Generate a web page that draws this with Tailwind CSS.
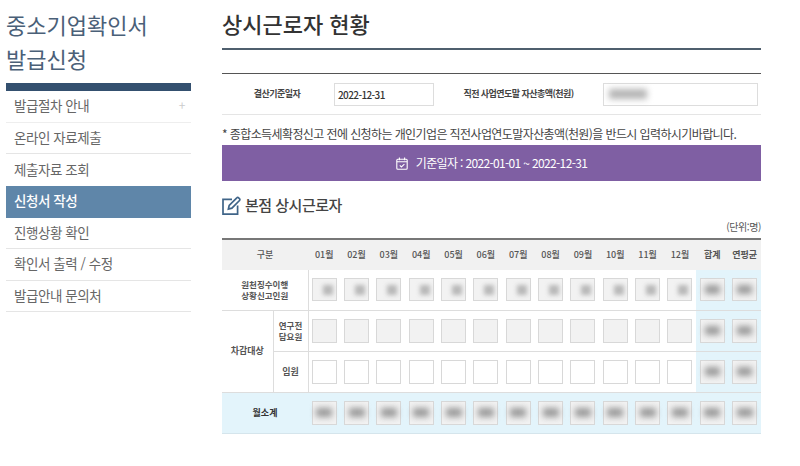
<!DOCTYPE html>
<html lang="ko">
<head>
  <meta charset="UTF-8" />
  <title>상시근로자 현황</title>
  <script src="https://cdn.jsdelivr.net/npm/@tailwindcss/browser@4"></script>
</head>
<body class="bg-white font-['Noto_Sans_CJK_KR','Noto_Sans',sans-serif] overflow-hidden">
<div class="flex w-[800px] h-[466px]">

  <!-- Sidebar -->
  <aside class="w-[185px] ml-[6px] shrink-0 pt-[7px]">
    <h2 class="text-[22px] leading-[34px] text-[#4a6078] h-[76px]">중소기업확인서<br>발급신청</h2>
    <div class="h-[8px] bg-[#34506f]"></div>
    <ul class="text-[13.5px] tracking-[-0.45px] text-[#666]">
      <li class="h-[31.5px] pb-[2px] pl-2 pr-[6px] flex items-center justify-between border-b border-[#eee]">발급절차 안내<span class="text-[#ccc] text-[12px]">+</span></li>
      <li class="h-[31.5px] pb-[2px] pl-2 flex items-center border-b border-[#e5e5e5]">온라인 자료제출</li>
      <li class="h-[31.5px] pb-[2px] pl-2 flex items-center">제출자료 조회</li>
      <li class="h-[32px] pb-[2px] pl-2 flex items-center bg-[#5f86a9] text-white font-medium">신청서 작성</li>
      <li class="h-[31.5px] pb-[2px] pl-2 flex items-center border-b border-[#e5e5e5]">진행상황 확인</li>
      <li class="h-[31.5px] pb-[2px] pl-2 flex items-center border-b border-[#e5e5e5]">확인서 출력 / 수정</li>
      <li class="h-[31.5px] pb-[2px] pl-2 flex items-center border-b border-[#e5e5e5]">발급안내 문의처</li>
    </ul>
  </aside>

  <!-- Main -->
  <main class="w-[539px] ml-[31px] shrink-0">
    <h1 class="text-[22px] leading-[47px] font-medium text-[#333] border-b-2 border-[#4f5f6e] box-content h-[48px]">상시근로자 현황</h1>

    <div class="mt-[23px] h-[42px] border-t border-b border-t-[#555] border-b-[#e5e5e5] flex items-center text-[9px] font-bold text-[#444] tracking-[-0.55px]">
      <div class="w-[110px] text-center">결산기준일자</div>
      <div class="w-[100px] ml-[2px] h-[23px] border border-[#ddd] flex items-center pl-[3px] text-[10px] tracking-[-0.6px] font-medium text-[#333]">2022-12-31</div>
      <div class="w-[169px] text-center">직전 사업연도말 자산총액(천원)</div>
      <div class="w-[155px] h-[23px] border border-[#ddd] flex items-center pl-[5px]"><div class="w-[38px] h-[10px] bg-[#b5b5b5] blur-[3px]"></div></div>
    </div>

    <p class="h-[30px] pt-2 flex items-center text-[12px] tracking-[-0.6px] text-[#444] whitespace-nowrap">* 종합소득세확정신고 전에 신청하는 개인기업은 직전사업연도말자산총액(천원)을 반드시 입력하시기바랍니다.</p>

    <div class="h-[36px] bg-[#7f5fa3] text-white text-[12px] tracking-[-0.65px] flex items-center justify-center gap-[8px]">
      <svg class="w-[12px] h-[13px]" viewBox="0 0 12 13" fill="none" stroke="currentColor" stroke-width="1.1"><rect x="0.8" y="2.2" width="10.4" height="10" rx="1"/><path d="M0.8 4.8h10.4M3.4 0.6v2.6M8.6 0.6v2.6M3.8 8.4l1.6 1.6 3-2.8"/></svg>
      <span>기준일자 : 2022-01-01 ~ 2022-12-31</span>
    </div>

    <div class="mt-[13px] h-[22px] flex items-center gap-[4px] text-[15px] tracking-[-0.5px] font-medium text-[#444]">
      <svg class="w-[19px] h-[19px] text-[#3f6488]" viewBox="0 0 19 19" fill="none" stroke="currentColor" stroke-width="1.7"><path d="M10 3.4H1v14.7h14.6V9.4"/><path d="M6.4 13l.8-3.6 7.6-7.6a1.2 1.2 0 0 1 1.8 0l.9.9a1.2 1.2 0 0 1 0 1.8L9.9 12.2z"/></svg>
      본점 상시근로자
    </div>
    <div class="h-[14px] mt-[4px] text-right text-[10px] leading-[14px] tracking-[-0.4px] text-[#555]">(단위:명)</div>

    <table class="w-[539px] table-fixed border-collapse text-[9px] text-[#555] text-center mt-[4px]">
      <colgroup>
        <col class="w-[51px]"><col class="w-[35px]">
      </colgroup>
      <thead>
        <tr class="h-[31px] bg-[#f1f1f1] border-t-2 border-[#777]">
          <th colspan="2" class="font-medium">구분</th>
          <th class="font-medium">01월</th><th class="font-medium">02월</th><th class="font-medium">03월</th><th class="font-medium">04월</th>
          <th class="font-medium">05월</th><th class="font-medium">06월</th><th class="font-medium">07월</th><th class="font-medium">08월</th>
          <th class="font-medium">09월</th><th class="font-medium">10월</th><th class="font-medium">11월</th><th class="font-medium">12월</th>
          <th class="font-bold">합계</th><th class="font-bold">연평균</th>
        </tr>
      </thead>
      <tbody>
        <tr class="h-[40px] border-b border-[#ddd]">
          <td colspan="2" class="leading-[11px] font-bold text-[8.5px] border-r border-[#ddd]">원천징수이행<br>상황신고인원</td>
          <td><div class="mx-auto w-[25px] h-[23px] border border-[#d8d8d8] bg-[#f2f2f2] flex items-center justify-end pr-[3px]"><div class="w-[10px] h-[10px] bg-[#b8b8b8] blur-[2px]"></div></div></td>
          <td><div class="mx-auto w-[25px] h-[23px] border border-[#d8d8d8] bg-[#f2f2f2] flex items-center justify-end pr-[3px]"><div class="w-[10px] h-[10px] bg-[#b8b8b8] blur-[2px]"></div></div></td>
          <td><div class="mx-auto w-[25px] h-[23px] border border-[#d8d8d8] bg-[#f2f2f2] flex items-center justify-end pr-[3px]"><div class="w-[10px] h-[10px] bg-[#b8b8b8] blur-[2px]"></div></div></td>
          <td><div class="mx-auto w-[25px] h-[23px] border border-[#d8d8d8] bg-[#f2f2f2] flex items-center justify-end pr-[3px]"><div class="w-[10px] h-[10px] bg-[#b8b8b8] blur-[2px]"></div></div></td>
          <td><div class="mx-auto w-[25px] h-[23px] border border-[#d8d8d8] bg-[#f2f2f2] flex items-center justify-end pr-[3px]"><div class="w-[10px] h-[10px] bg-[#b8b8b8] blur-[2px]"></div></div></td>
          <td><div class="mx-auto w-[25px] h-[23px] border border-[#d8d8d8] bg-[#f2f2f2] flex items-center justify-end pr-[3px]"><div class="w-[10px] h-[10px] bg-[#b8b8b8] blur-[2px]"></div></div></td>
          <td><div class="mx-auto w-[25px] h-[23px] border border-[#d8d8d8] bg-[#f2f2f2] flex items-center justify-end pr-[3px]"><div class="w-[10px] h-[10px] bg-[#b8b8b8] blur-[2px]"></div></div></td>
          <td><div class="mx-auto w-[25px] h-[23px] border border-[#d8d8d8] bg-[#f2f2f2] flex items-center justify-end pr-[3px]"><div class="w-[10px] h-[10px] bg-[#b8b8b8] blur-[2px]"></div></div></td>
          <td><div class="mx-auto w-[25px] h-[23px] border border-[#d8d8d8] bg-[#f2f2f2] flex items-center justify-end pr-[3px]"><div class="w-[10px] h-[10px] bg-[#b8b8b8] blur-[2px]"></div></div></td>
          <td><div class="mx-auto w-[25px] h-[23px] border border-[#d8d8d8] bg-[#f2f2f2] flex items-center justify-end pr-[3px]"><div class="w-[10px] h-[10px] bg-[#b8b8b8] blur-[2px]"></div></div></td>
          <td><div class="mx-auto w-[25px] h-[23px] border border-[#d8d8d8] bg-[#f2f2f2] flex items-center justify-end pr-[3px]"><div class="w-[10px] h-[10px] bg-[#b8b8b8] blur-[2px]"></div></div></td>
          <td><div class="mx-auto w-[25px] h-[23px] border border-[#d8d8d8] bg-[#f2f2f2] flex items-center justify-end pr-[3px]"><div class="w-[10px] h-[10px] bg-[#b8b8b8] blur-[2px]"></div></div></td>
          <td class="bg-[#e3f4fb]"><div class="mx-auto w-[25px] h-[23px] border border-[#d8d8d8] bg-[#f2f2f2] flex items-center justify-center"><div class="w-[15px] h-[9px] bg-[#999] blur-[3px]"></div></div></td>
          <td class="bg-[#e3f4fb]"><div class="mx-auto w-[25px] h-[23px] border border-[#d8d8d8] bg-[#f2f2f2] flex items-center justify-center"><div class="w-[15px] h-[9px] bg-[#999] blur-[3px]"></div></div></td>
        </tr>
        <tr class="h-[41px] border-b border-[#ddd]">
          <td rowspan="2" class="font-bold border-r border-[#ddd]">차감대상</td>
          <td class="leading-[11px] text-[8.5px] font-bold border-r border-[#ddd]">연구전<br>담요원</td>
          <td><div class="mx-auto w-[25px] h-[24px] border border-[#d8d8d8] bg-[#f2f2f2]"></div></td>
          <td><div class="mx-auto w-[25px] h-[24px] border border-[#d8d8d8] bg-[#f2f2f2]"></div></td>
          <td><div class="mx-auto w-[25px] h-[24px] border border-[#d8d8d8] bg-[#f2f2f2]"></div></td>
          <td><div class="mx-auto w-[25px] h-[24px] border border-[#d8d8d8] bg-[#f2f2f2]"></div></td>
          <td><div class="mx-auto w-[25px] h-[24px] border border-[#d8d8d8] bg-[#f2f2f2]"></div></td>
          <td><div class="mx-auto w-[25px] h-[24px] border border-[#d8d8d8] bg-[#f2f2f2]"></div></td>
          <td><div class="mx-auto w-[25px] h-[24px] border border-[#d8d8d8] bg-[#f2f2f2]"></div></td>
          <td><div class="mx-auto w-[25px] h-[24px] border border-[#d8d8d8] bg-[#f2f2f2]"></div></td>
          <td><div class="mx-auto w-[25px] h-[24px] border border-[#d8d8d8] bg-[#f2f2f2]"></div></td>
          <td><div class="mx-auto w-[25px] h-[24px] border border-[#d8d8d8] bg-[#f2f2f2]"></div></td>
          <td><div class="mx-auto w-[25px] h-[24px] border border-[#d8d8d8] bg-[#f2f2f2]"></div></td>
          <td><div class="mx-auto w-[25px] h-[24px] border border-[#d8d8d8] bg-[#f2f2f2]"></div></td>
          <td class="bg-[#e3f4fb]"><div class="mx-auto w-[25px] h-[24px] border border-[#d8d8d8] bg-[#f2f2f2] flex items-center justify-center"><div class="w-[15px] h-[9px] bg-[#999] blur-[3px]"></div></div></td>
          <td class="bg-[#e3f4fb]"><div class="mx-auto w-[25px] h-[24px] border border-[#d8d8d8] bg-[#f2f2f2] flex items-center justify-center"><div class="w-[15px] h-[9px] bg-[#999] blur-[3px]"></div></div></td>
        </tr>
        <tr class="h-[41px] border-b border-[#ddd]">
          <td class="font-bold border-r border-[#ddd]">임원</td>
          <td><div class="mx-auto w-[25px] h-[24px] border border-[#d8d8d8] bg-white"></div></td>
          <td><div class="mx-auto w-[25px] h-[24px] border border-[#d8d8d8] bg-white"></div></td>
          <td><div class="mx-auto w-[25px] h-[24px] border border-[#d8d8d8] bg-white"></div></td>
          <td><div class="mx-auto w-[25px] h-[24px] border border-[#d8d8d8] bg-white"></div></td>
          <td><div class="mx-auto w-[25px] h-[24px] border border-[#d8d8d8] bg-white"></div></td>
          <td><div class="mx-auto w-[25px] h-[24px] border border-[#d8d8d8] bg-white"></div></td>
          <td><div class="mx-auto w-[25px] h-[24px] border border-[#d8d8d8] bg-white"></div></td>
          <td><div class="mx-auto w-[25px] h-[24px] border border-[#d8d8d8] bg-white"></div></td>
          <td><div class="mx-auto w-[25px] h-[24px] border border-[#d8d8d8] bg-white"></div></td>
          <td><div class="mx-auto w-[25px] h-[24px] border border-[#d8d8d8] bg-white"></div></td>
          <td><div class="mx-auto w-[25px] h-[24px] border border-[#d8d8d8] bg-white"></div></td>
          <td><div class="mx-auto w-[25px] h-[24px] border border-[#d8d8d8] bg-white"></div></td>
          <td class="bg-[#e3f4fb]"><div class="mx-auto w-[25px] h-[24px] border border-[#d8d8d8] bg-[#f2f2f2] flex items-center justify-center"><div class="w-[15px] h-[9px] bg-[#999] blur-[3px]"></div></div></td>
          <td class="bg-[#e3f4fb]"><div class="mx-auto w-[25px] h-[24px] border border-[#d8d8d8] bg-[#f2f2f2] flex items-center justify-center"><div class="w-[15px] h-[9px] bg-[#999] blur-[3px]"></div></div></td>
        </tr>
        <tr class="h-[41px] bg-[#e3f4fb] border-b border-[#d5e5ec]">
          <td colspan="2" class="font-bold text-[#333]">월소계</td>
          <td><div class="mx-auto w-[25px] h-[24px] border border-[#d8d8d8] bg-[#f2f2f2] flex items-center justify-center"><div class="w-[16px] h-[9px] bg-[#999] blur-[3px]"></div></div></td>
          <td><div class="mx-auto w-[25px] h-[24px] border border-[#d8d8d8] bg-[#f2f2f2] flex items-center justify-center"><div class="w-[16px] h-[9px] bg-[#999] blur-[3px]"></div></div></td>
          <td><div class="mx-auto w-[25px] h-[24px] border border-[#d8d8d8] bg-[#f2f2f2] flex items-center justify-center"><div class="w-[16px] h-[9px] bg-[#999] blur-[3px]"></div></div></td>
          <td><div class="mx-auto w-[25px] h-[24px] border border-[#d8d8d8] bg-[#f2f2f2] flex items-center justify-center"><div class="w-[16px] h-[9px] bg-[#999] blur-[3px]"></div></div></td>
          <td><div class="mx-auto w-[25px] h-[24px] border border-[#d8d8d8] bg-[#f2f2f2] flex items-center justify-center"><div class="w-[16px] h-[9px] bg-[#999] blur-[3px]"></div></div></td>
          <td><div class="mx-auto w-[25px] h-[24px] border border-[#d8d8d8] bg-[#f2f2f2] flex items-center justify-center"><div class="w-[16px] h-[9px] bg-[#999] blur-[3px]"></div></div></td>
          <td><div class="mx-auto w-[25px] h-[24px] border border-[#d8d8d8] bg-[#f2f2f2] flex items-center justify-center"><div class="w-[16px] h-[9px] bg-[#999] blur-[3px]"></div></div></td>
          <td><div class="mx-auto w-[25px] h-[24px] border border-[#d8d8d8] bg-[#f2f2f2] flex items-center justify-center"><div class="w-[16px] h-[9px] bg-[#999] blur-[3px]"></div></div></td>
          <td><div class="mx-auto w-[25px] h-[24px] border border-[#d8d8d8] bg-[#f2f2f2] flex items-center justify-center"><div class="w-[16px] h-[9px] bg-[#999] blur-[3px]"></div></div></td>
          <td><div class="mx-auto w-[25px] h-[24px] border border-[#d8d8d8] bg-[#f2f2f2] flex items-center justify-center"><div class="w-[16px] h-[9px] bg-[#999] blur-[3px]"></div></div></td>
          <td><div class="mx-auto w-[25px] h-[24px] border border-[#d8d8d8] bg-[#f2f2f2] flex items-center justify-center"><div class="w-[16px] h-[9px] bg-[#999] blur-[3px]"></div></div></td>
          <td><div class="mx-auto w-[25px] h-[24px] border border-[#d8d8d8] bg-[#f2f2f2] flex items-center justify-center"><div class="w-[16px] h-[9px] bg-[#999] blur-[3px]"></div></div></td>
          <td><div class="mx-auto w-[25px] h-[24px] border border-[#d8d8d8] bg-[#f2f2f2] flex items-center justify-center"><div class="w-[16px] h-[9px] bg-[#999] blur-[3px]"></div></div></td>
          <td><div class="mx-auto w-[25px] h-[24px] border border-[#d8d8d8] bg-[#f2f2f2] flex items-center justify-center"><div class="w-[16px] h-[9px] bg-[#999] blur-[3px]"></div></div></td>
        </tr>
      </tbody>
    </table>
  </main>
</div>
</body>
</html>
